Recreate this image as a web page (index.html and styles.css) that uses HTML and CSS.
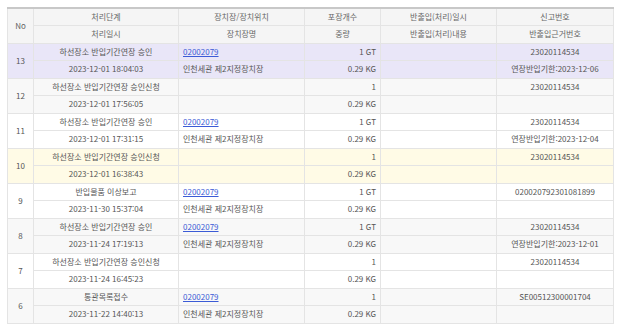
FILE: index.html
```html
<!DOCTYPE html>
<html lang="ko">
<head>
<meta charset="utf-8">
<link rel="stylesheet" href="styles.css">
</head>
<body>
<table class="grid">
  <colgroup>
    <col class="c-no"><col class="c-step"><col class="c-loc"><col class="c-pkg"><col class="c-io"><col class="c-rep">
  </colgroup>
  <thead>
    <tr><th rowspan="2" class="no">No</th><th>처리단계</th><th>장치장/장치위치</th><th>포장개수</th><th>반출입(처리)일시</th><th>신고번호</th></tr>
    <tr><th>처리일시</th><th>장치장명</th><th>중량</th><th>반출입(처리)내용</th><th>반출입근거번호</th></tr>
  </thead>
  <tbody class="sel">
    <tr><td rowspan="2" class="no">13</td><td class="ctr">하선장소 반입기간연장 승인</td><td class="lft"><a href="#">02002079</a></td><td class="rgt">1 GT</td><td></td><td class="ctr">23020114534</td></tr>
    <tr><td class="ctr">2023-12-01 18:04:03</td><td class="lft">인천세관 제2지정장치장</td><td class="rgt">0.29 KG</td><td></td><td class="ctr">연장반입기한:2023-12-06</td></tr>
  </tbody>
  <tbody class="alt">
    <tr><td rowspan="2" class="no">12</td><td class="ctr">하선장소 반입기간연장 승인신청</td><td class="lft"></td><td class="rgt">1</td><td></td><td class="ctr">23020114534</td></tr>
    <tr><td class="ctr">2023-12-01 17:56:05</td><td class="lft"></td><td class="rgt">0.29 KG</td><td></td><td class="ctr"></td></tr>
  </tbody>
  <tbody>
    <tr><td rowspan="2" class="no">11</td><td class="ctr">하선장소 반입기간연장 승인</td><td class="lft"><a href="#">02002079</a></td><td class="rgt">1 GT</td><td></td><td class="ctr">23020114534</td></tr>
    <tr><td class="ctr">2023-12-01 17:31:15</td><td class="lft">인천세관 제2지정장치장</td><td class="rgt">0.29 KG</td><td></td><td class="ctr">연장반입기한:2023-12-04</td></tr>
  </tbody>
  <tbody class="hl">
    <tr><td rowspan="2" class="no">10</td><td class="ctr">하선장소 반입기간연장 승인신청</td><td class="lft"></td><td class="rgt">1</td><td></td><td class="ctr">23020114534</td></tr>
    <tr><td class="ctr">2023-12-01 16:38:43</td><td class="lft"></td><td class="rgt">0.29 KG</td><td></td><td class="ctr"></td></tr>
  </tbody>
  <tbody>
    <tr><td rowspan="2" class="no">9</td><td class="ctr">반입물품 이상보고</td><td class="lft"><a href="#">02002079</a></td><td class="rgt">1 GT</td><td></td><td class="ctr">020020792301081899</td></tr>
    <tr><td class="ctr">2023-11-30 15:37:04</td><td class="lft">인천세관 제2지정장치장</td><td class="rgt">0.29 KG</td><td></td><td class="ctr"></td></tr>
  </tbody>
  <tbody class="alt">
    <tr><td rowspan="2" class="no">8</td><td class="ctr">하선장소 반입기간연장 승인</td><td class="lft"><a href="#">02002079</a></td><td class="rgt">1 GT</td><td></td><td class="ctr">23020114534</td></tr>
    <tr><td class="ctr">2023-11-24 17:19:13</td><td class="lft">인천세관 제2지정장치장</td><td class="rgt">0.29 KG</td><td></td><td class="ctr">연장반입기한:2023-12-01</td></tr>
  </tbody>
  <tbody>
    <tr><td rowspan="2" class="no">7</td><td class="ctr">하선장소 반입기간연장 승인신청</td><td class="lft"></td><td class="rgt">1</td><td></td><td class="ctr">23020114534</td></tr>
    <tr><td class="ctr">2023-11-24 16:45:23</td><td class="lft"></td><td class="rgt">0.29 KG</td><td></td><td class="ctr"></td></tr>
  </tbody>
  <tbody class="alt">
    <tr><td rowspan="2" class="no">6</td><td class="ctr">통관목록접수</td><td class="lft"><a href="#">02002079</a></td><td class="rgt">1</td><td></td><td class="ctr">SE00512300001704</td></tr>
    <tr><td class="ctr">2023-11-22 14:40:13</td><td class="lft">인천세관 제2지정장치장</td><td class="rgt">0.29 KG</td><td></td><td class="ctr"></td></tr>
  </tbody>
</table>
</body>
</html>
```
FILE: styles.css
```css
html, body {
  margin: 0;
  padding: 0;
  background: #ffffff;
}
body {
  padding: 7px 7px 0 7px;
  font-family: "Noto Sans CJK KR", "Noto Sans", sans-serif;
  font-size: 8px;
  color: #555555;
}
.grid {
  width: 606px;
  border-collapse: collapse;
  table-layout: fixed;
  border-top: 2px solid #c8c8c8;
}
.c-no { width: 26px; }
.c-step { width: 145px; }
.c-loc { width: 126px; }
.c-pkg { width: 76px; }
.c-io { width: 116px; }
.c-rep { width: 117px; }
.grid tr { height: 17.5px; }
.grid th, .grid td {
  border: 1px solid #e4e4e4;
  padding: 0 4px;
  line-height: 12px;
  white-space: nowrap;
  overflow: hidden;
}
.grid th {
  background: #f5f5f5;
  font-weight: normal;
  color: #666666;
  text-align: center;
}
.grid td.no, .grid th.no { text-align: center; padding: 0; }
.ctr { text-align: center; }
.lft { text-align: left; }
.rgt { text-align: right; }
.grid a { color: #3b5bd6; text-decoration: underline; }
.alt td { background: #f8f8f8; }
.sel td { background: #e9e6f8; }
.hl td { background: #fffbe6; }
```
